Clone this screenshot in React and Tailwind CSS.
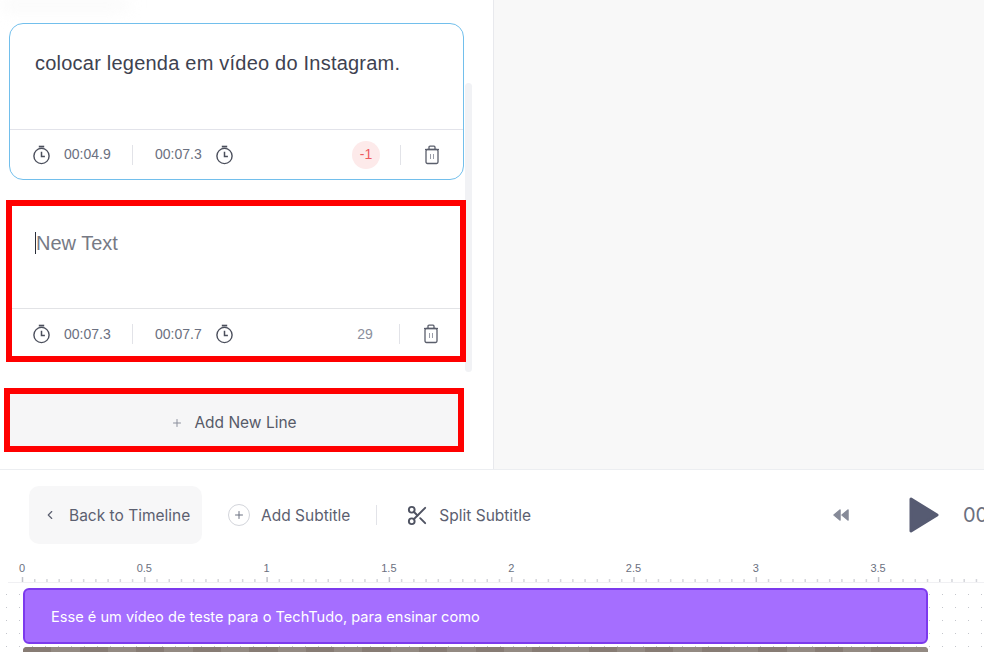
import React from 'react';
import { ChevronLeft, Plus, Scissors } from 'lucide-react';

const LABELS = ['0', '0.5', '1', '1.5', '2', '2.5', '3', '3.5'];

function Stopwatch() {
  return (
    <svg width="19" height="20" viewBox="0 0 19 20" fill="none" stroke="#4b4f5c" strokeWidth="1.4" className="shrink-0">
      <circle cx="9.5" cy="11" r="7.6" />
      <path d="M6.8 1.6h5.4" strokeWidth="1.8" />
      <path d="M9.5 6.8v4.6h3.4" strokeWidth="1.5" />
    </svg>
  );
}

function Trash() {
  return (
    <svg width="16" height="20" viewBox="0 0 16 20" fill="none" stroke="#5a5e6b" strokeWidth="1.3" className="shrink-0">
      <path d="M1 4.5h14" />
      <path d="M5 4.3V2.2c0-.6.4-1 1-1h4c.6 0 1 .4 1 1v2.1" />
      <rect x="2" y="4.5" width="12" height="14" rx="1.4" />
      <path d="M6.5 9v5M9.5 9v5" strokeWidth="1" stroke="#9a9da8" />
    </svg>
  );
}

function CardFooter({ start, end, count, over, className }) {
  return (
    <div className={`flex items-center text-[14px] text-[#6b7080] ${className}`}>
      <Stopwatch />
      <span className="ml-[13px] w-[47px]">{start}</span>
      <div className="ml-[21px] h-[20px] w-px bg-[#e2e3e8]" />
      <span className="ml-[22px] w-[47px]">{end}</span>
      <div className="ml-[13px]"><Stopwatch /></div>
      <div className="flex-1" />
      {over ? (
        <span className="flex h-[28px] w-[28px] items-center justify-center rounded-full bg-[#fdeaea] text-[#ee5a5f]">{count}</span>
      ) : (
        <span className="w-[28px] text-center text-[#8b8f9c]">{count}</span>
      )}
      <div className="ml-[20px] h-[20px] w-px bg-[#e2e3e8]" />
      <div className="ml-[23px]"><Trash /></div>
    </div>
  );
}

function Ruler() {
  return (
    <div className="relative h-[28px] shrink-0">
      <div className="mt-[1px] flex h-[14px] items-center pl-[22px] text-[11px] leading-none text-[#6b7080]">
        {LABELS.map((label) => (
          <div key={label} className="flex w-[122.3px] shrink-0">
            <span className="flex w-0 justify-center">{label}</span>
          </div>
        ))}
      </div>
      <svg width="984" height="12" className="absolute bottom-[4px] left-0">
        <line x1="8" y1="10.5" x2="984" y2="10.5" stroke="#f0f0f3" />
        {Array.from({ length: 80 }).map((_, i) => {
          const x = 22.5 + i * 12.23;
          const big = i % 10 === 0;
          return <line key={i} x1={x} x2={x} y1={big ? 5 : 7} y2="10" stroke={big ? '#c3c5cc' : '#d5d6db'} strokeWidth="1.5" />;
        })}
      </svg>
    </div>
  );
}

export default function App() {
  return (
    <div className="flex h-[652px] w-[984px] flex-col overflow-hidden bg-white font-['Liberation_Sans',sans-serif]">
      {/* editor + preview */}
      <div className="flex h-[470px] shrink-0 border-b border-[#eceef1]">
        <div className="relative w-[494px] shrink-0 border-r border-[#e8e9ed] bg-white pl-[4px] pt-[23px]">
          <div className="absolute left-0 top-0 h-[10px] w-[130px] rounded-br-full bg-[#f8f8f8] blur-sm" />
          <div className="absolute left-[465px] top-[83px] h-[289px] w-[7px] rounded bg-[#f1f2f5]" />
          <div className="relative ml-[5px] w-[455px] rounded-[14px] border border-[#72bfec] bg-white">
            <div className="h-[105px] pl-[25px] pt-[27px] text-[20px] leading-[24px] tracking-[0.22px] text-[#3e4250]">colocar legenda em vídeo do Instagram.</div>
            <div className="border-t border-[#e2e3ea]">
              <CardFooter start="00:04.9" end="00:07.3" count="-1" over className="h-[49px] pl-[22px] pr-[23px]" />
            </div>
          </div>
          <div className="relative ml-[2px] mt-[20px] w-[460px] border-[6px] border-[#ff0000] bg-white">
            <div className="h-[102px] pl-[23px] pt-[25px] text-[20px] leading-[24px] text-[#777a85]">
              <span className="border-l border-[#2a2e3a]">New Text</span>
            </div>
            <div className="border-t border-[#e2e3e6]">
              <CardFooter start="00:07.3" end="00:07.7" count="29" className="h-[47px] pl-[20px] pr-[21px] pt-[3px]" />
            </div>
          </div>
          <div className="mt-[26px] flex h-[64px] w-[460px] items-center justify-center border-[6px] border-[#ff0000] bg-[#f6f6f7] pt-[6px] font-['Inter',sans-serif] text-[15.5px] text-[#565a68]">
            <Plus size={12} className="mr-[11px] text-[#8b8f9c]" />
            <span>Add New Line</span>
          </div>
        </div>
        <div className="flex-1 bg-[#f8f8f8]" />
      </div>

      {/* timeline */}
      <div className="flex h-[90px] shrink-0 items-center overflow-hidden pl-[29px] font-['Inter',sans-serif] text-[15.5px] text-[#5c6070]">
        <div className="flex h-[58px] w-[173px] shrink-0 items-center rounded-[10px] bg-[#f7f7f8] pl-[14px]">
          <ChevronLeft size={14} strokeWidth={2} />
          <span className="ml-[12px] whitespace-nowrap pt-[2px]">Back to Timeline</span>
        </div>
        <div className="ml-[26px] flex h-[22px] w-[22px] shrink-0 items-center justify-center rounded-full border border-[#d3d5db]">
          <Plus size={12} className="text-[#6b7080]" />
        </div>
        <span className="ml-[11px] whitespace-nowrap pt-[2px]">Add Subtitle</span>
        <div className="ml-[26px] h-[20px] w-px shrink-0 bg-[#e2e3e8]" />
        <Scissors size={23} strokeWidth={2} className="ml-[29px] shrink-0 text-[#4f5362]" />
        <span className="ml-[10px] whitespace-nowrap pt-[2px]">Split Subtitle</span>
        <svg width="18" height="14" viewBox="0 0 18 14" className="ml-[301px] shrink-0" fill="#868a98" stroke="#868a98" strokeWidth="1.5" strokeLinejoin="round">
          <path d="M8 2 2 7l6 5zM16 2l-6 5 6 5z" />
        </svg>
        <svg width="30" height="36" viewBox="0 0 30 36" className="ml-[59px] shrink-0" fill="#565b72" stroke="#565b72" strokeWidth="3" strokeLinejoin="round">
          <path d="M2 2 28 18 2 34z" />
        </svg>
        <span className="ml-[24px] whitespace-nowrap text-[20px] text-[#6b7080]">00:00.0</span>
      </div>

      <Ruler />

      <div className="relative flex-1 bg-[radial-gradient(#c4c6cc_0.7px,transparent_0.9px)] bg-[length:13px_13px]">
        <div className="ml-[23px] flex h-[56px] w-[905px] items-center rounded-[6px] border-2 border-[#7c3aed] bg-[#a56eff] pl-[26px] pt-[3px] font-['Inter',sans-serif] text-[14.6px] text-white">
          Esse é um vídeo de teste para o TechTudo, para ensinar como
        </div>
        <div className="ml-[23px] mt-[3px] flex h-[8px] w-[905px] overflow-hidden rounded-t bg-[#8f8680]">
          {Array.from({ length: 32 }).map((_, i) => (
            <div key={i} className={i % 2 ? 'h-full flex-1 bg-[#938a82]' : 'h-full flex-1 bg-[#877c74]'} />
          ))}
        </div>
      </div>
    </div>
  );
}
